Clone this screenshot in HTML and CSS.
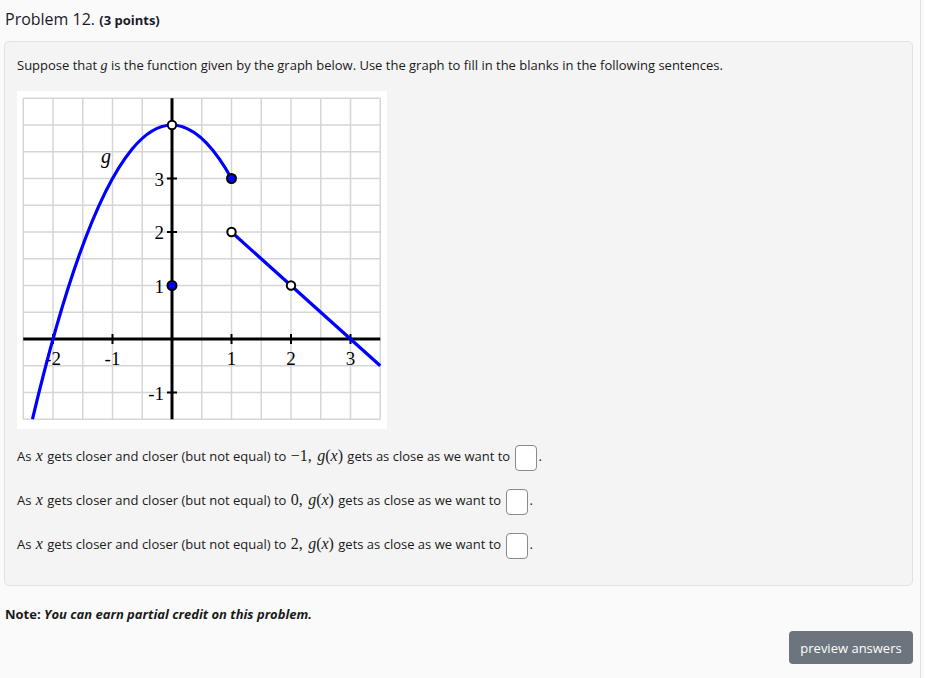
FILE: index.html
```html
<!DOCTYPE html>
<html>
<head>
<meta charset="utf-8">
<link rel="stylesheet" href="styles.css">
</head>
<body>
<div class="page">
  <h3 class="title">Problem 12. <span class="pts">(3 points)</span></h3>
  <div class="problem">
    <p class="intro">Suppose that <span class="mi">g</span> is the function given by the graph below. Use the graph to fill in the blanks in the following sentences.</p>
    <div class="graph">
      <svg width="370" height="338" viewBox="0 0 370 338">
        <rect x="0" y="0" width="370" height="338" fill="#fff"/>
        <g stroke="#d6d6d6" stroke-width="1.5">
          <line x1="6.25" y1="7.25" x2="6.25" y2="328.25"/>
          <line x1="36" y1="7.25" x2="36" y2="328.25"/>
          <line x1="65.75" y1="7.25" x2="65.75" y2="328.25"/>
          <line x1="95.5" y1="7.25" x2="95.5" y2="328.25"/>
          <line x1="125.25" y1="7.25" x2="125.25" y2="328.25"/>
          <line x1="184.75" y1="7.25" x2="184.75" y2="328.25"/>
          <line x1="214.5" y1="7.25" x2="214.5" y2="328.25"/>
          <line x1="244.25" y1="7.25" x2="244.25" y2="328.25"/>
          <line x1="274" y1="7.25" x2="274" y2="328.25"/>
          <line x1="303.75" y1="7.25" x2="303.75" y2="328.25"/>
          <line x1="333.5" y1="7.25" x2="333.5" y2="328.25"/>
          <line x1="363.25" y1="7.25" x2="363.25" y2="328.25"/>
          <line x1="6.25" y1="7.25" x2="363.25" y2="7.25"/>
          <line x1="6.25" y1="34" x2="363.25" y2="34"/>
          <line x1="6.25" y1="60.75" x2="363.25" y2="60.75"/>
          <line x1="6.25" y1="87.5" x2="363.25" y2="87.5"/>
          <line x1="6.25" y1="114.25" x2="363.25" y2="114.25"/>
          <line x1="6.25" y1="141" x2="363.25" y2="141"/>
          <line x1="6.25" y1="167.75" x2="363.25" y2="167.75"/>
          <line x1="6.25" y1="194.5" x2="363.25" y2="194.5"/>
          <line x1="6.25" y1="221.25" x2="363.25" y2="221.25"/>
          <line x1="6.25" y1="274.75" x2="363.25" y2="274.75"/>
          <line x1="6.25" y1="301.5" x2="363.25" y2="301.5"/>
          <line x1="6.25" y1="328.25" x2="363.25" y2="328.25"/>
        </g>
        <g stroke="#000" stroke-width="3">
          <line x1="6.25" y1="248" x2="363.25" y2="248"/>
          <line x1="155" y1="7.25" x2="155" y2="328.25"/>
        </g>
        <g stroke="#000" stroke-width="2">
          <line x1="36" y1="243" x2="36" y2="253"/>
          <line x1="95.5" y1="243" x2="95.5" y2="253"/>
          <line x1="214.5" y1="243" x2="214.5" y2="253"/>
          <line x1="274" y1="243" x2="274" y2="253"/>
          <line x1="333.5" y1="243" x2="333.5" y2="253"/>
          <line x1="150" y1="194.5" x2="160" y2="194.5"/>
          <line x1="150" y1="141" x2="160" y2="141"/>
          <line x1="150" y1="87.5" x2="160" y2="87.5"/>
          <line x1="150" y1="301.5" x2="160" y2="301.5"/>
        </g>
        <g class="lbl" font-size="19">
          <text x="36" y="274" text-anchor="middle">-2</text>
          <text x="95.5" y="274" text-anchor="middle">-1</text>
          <text x="214.5" y="274" text-anchor="middle">1</text>
          <text x="274" y="274" text-anchor="middle">2</text>
          <text x="333.5" y="274" text-anchor="middle">3</text>
          <text x="147" y="94.5" text-anchor="end">3</text>
          <text x="147" y="148" text-anchor="end">2</text>
          <text x="147" y="201.5" text-anchor="end">1</text>
          <text x="147" y="308.5" text-anchor="end">-1</text>
          <text x="84" y="72" font-style="italic" font-size="20">g</text>
        </g>
        <g fill="none" stroke="#0000ff" stroke-width="3.2">
          <path d="M15.47 328.2 Q114.99 -91.46 214.5 87.5"/>
          <path d="M214.5 141 L363.25 274.75"/>
        </g>
        <g stroke="#000" stroke-width="2">
          <circle cx="155" cy="34" r="4.2" fill="#fff"/>
          <circle cx="214.5" cy="87.5" r="4.5" fill="#0000ff"/>
          <circle cx="214.5" cy="141" r="4.2" fill="#fff"/>
          <circle cx="274" cy="194.5" r="4.2" fill="#fff"/>
          <circle cx="155" cy="194.5" r="4.5" fill="#0000ff"/>
        </g>
      </svg>
    </div>
    <p class="q first">As <span class="mi">x</span> gets closer and closer (but not equal) to <span class="mn">−1,</span> <span class="mn"><span class="mi">g</span>(<span class="mi">x</span>)</span> gets as close as we want to <span class="blank"></span>.</p>
    <p class="q">As <span class="mi">x</span> gets closer and closer (but not equal) to <span class="mn">0,</span> <span class="mn"><span class="mi">g</span>(<span class="mi">x</span>)</span> gets as close as we want to <span class="blank"></span>.</p>
    <p class="q">As <span class="mi">x</span> gets closer and closer (but not equal) to <span class="mn">2,</span> <span class="mn"><span class="mi">g</span>(<span class="mi">x</span>)</span> gets as close as we want to <span class="blank"></span>.</p>
  </div>
  <p class="note"><b>Note:</b> <b><i>You can earn partial credit on this problem.</i></b></p>
  <div class="actions">
    <button class="preview">preview answers</button>
  </div>
</div>
</body>
</html>
```

FILE: styles.css
```css
html, body {
  margin: 0;
  padding: 0;
  background: #fafafa;
}
body {
  font-family: "Open Sans", "Noto Sans", sans-serif;
  color: #1a1a1a;
}
.page {
  width: 921px;
  min-height: 678px;
  border-right: 1px solid #e2e2e2;
  box-sizing: border-box;
}
.title {
  margin: 0;
  padding: 8px 0 0 5px;
  height: 41px;
  box-sizing: border-box;
  font-size: 16px;
  font-weight: 400;
  color: #1a1a2a;
}
.pts {
  font-size: 13px;
  font-weight: 700;
}
.problem {
  margin-left: 4px;
  width: 909px;
  height: 545px;
  box-sizing: border-box;
  background: #f4f4f4;
  border: 1px solid #e2e2e2;
  border-radius: 5px;
  padding: 14px 12px 0 12px;
}
.intro {
  margin: 0;
  font-size: 13px;
  line-height: 18px;
}
.mi {
  font-family: "Liberation Serif", "DejaVu Serif", serif;
  font-style: italic;
  font-size: 16px;
}
.intro .mi {
  font-size: 14px;
}
.mn {
  font-family: "Liberation Serif", "DejaVu Serif", serif;
  font-size: 16px;
}
.q .mi, .q .mn {
  margin: 0 1px;
}
.q .mn .mi {
  margin: 0;
}
.graph {
  margin-top: 16px;
  display: flex;
}
.graph svg {
  display: block;
}
.lbl text {
  font-family: "Liberation Serif", "DejaVu Serif", serif;
  fill: #000;
}
.q {
  margin: 0;
  font-size: 13px;
  line-height: 44px;
  height: 44px;
}
.q.first {
  margin-top: 5px;
}
.blank {
  display: inline-block;
  vertical-align: middle;
  width: 22px;
  height: 26px;
  box-sizing: border-box;
  border: 1px solid #8a8a8a;
  border-radius: 4px;
  background: #fff;
  margin-left: 1px;
  margin-right: 2px;
}
.note {
  margin: 19px 0 0 5px;
  font-size: 13px;
}
.actions {
  display: flex;
  justify-content: flex-end;
  margin-top: 8px;
  padding-right: 7px;
}
.preview {
  width: 124px;
  height: 33px;
  background: #6c757d;
  color: #fff;
  border: none;
  border-radius: 4px;
  font-family: "Open Sans", "Noto Sans", sans-serif;
  font-size: 13px;
  padding: 0;
}
```
